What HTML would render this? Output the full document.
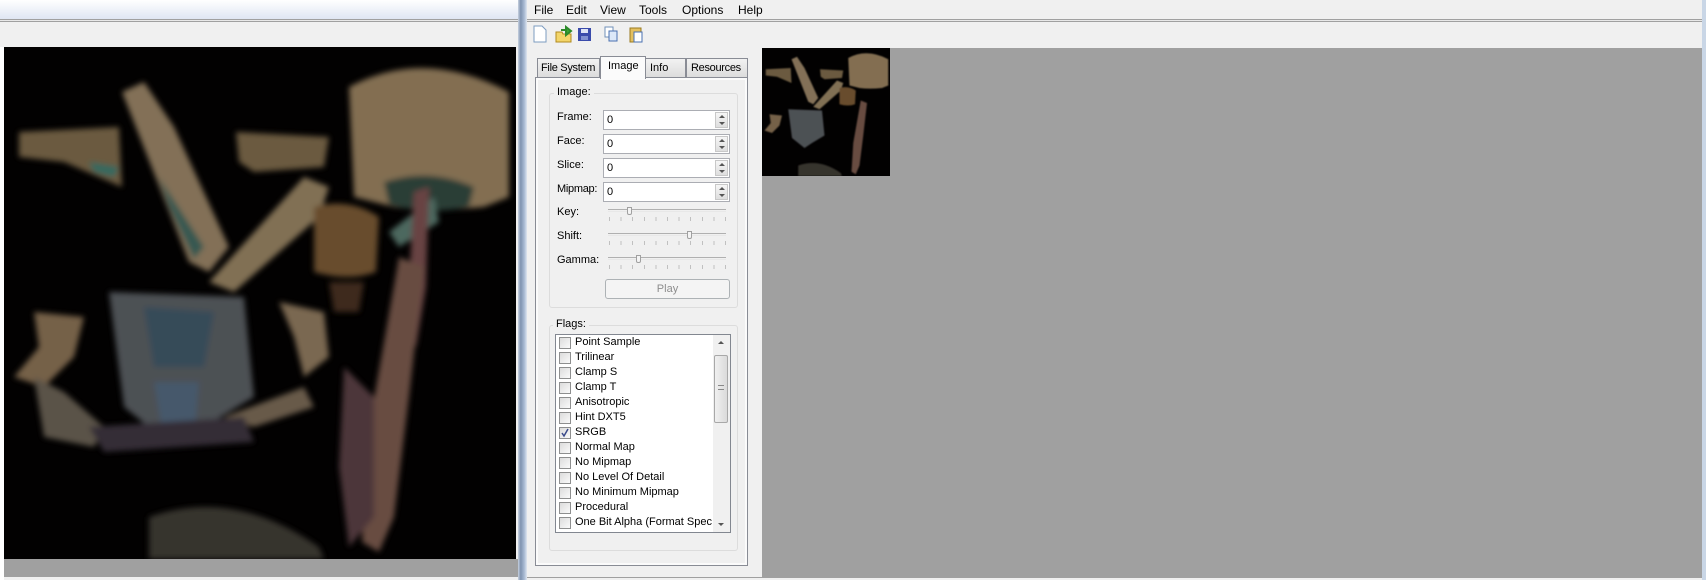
<!DOCTYPE html>
<html><head><meta charset="utf-8"><style>
*{margin:0;padding:0;box-sizing:border-box}
body{width:1706px;height:580px;overflow:hidden;background:#f0f0f0;font-family:"Liberation Sans",sans-serif;font-size:11px;color:#000;position:relative}
.a{position:absolute;white-space:nowrap}
.lbl{position:absolute;font-size:11px}
.tb{position:absolute;left:603px;width:127px;height:20px;background:#fff;border:1px solid #abadb3;padding:3px 0 0 3px;font-size:11px}
.spin{position:absolute;right:1px;top:1px;width:13px;height:16px;border:1px solid #c8c8c8;background:linear-gradient(#f6f6f6,#dedede)}
.spin:before{content:"";position:absolute;left:3px;top:2px;border:3px solid transparent;border-bottom:3px solid #555;border-top:0}
.spin:after{content:"";position:absolute;left:3px;bottom:2px;border:3px solid transparent;border-top:3px solid #555;border-bottom:0}
.track{position:absolute;left:608px;width:118px;height:3px;border-top:1px solid #b0b0b0;border-bottom:1px solid #e8e8e8}
.ticks{position:absolute;left:609px;width:117px;height:4px;background:repeating-linear-gradient(90deg,#c0c0c0 0 1px,transparent 1px 11.6px)}
.thumb{position:absolute;width:5px;height:8px;background:#f4f4f4;border:1px solid #a0a0a0;border-radius:0 0 2px 2px}
.cb{position:absolute;left:559px;width:12px;height:12px;border:1px solid #8e8f8f;background:linear-gradient(135deg,#dcdcdc,#fafafa)}
.it{position:absolute;left:575px;font-size:11px;white-space:nowrap}
</style></head><body>
<div class="a" style="left:0;top:0;width:520px;height:19px;background:linear-gradient(#fff,#dfe6f3)"></div>
<div class="a" style="left:0;top:19px;width:520px;height:3px;border-top:1px solid #a0a0a0;border-bottom:1px solid #a0a0a0;background:#e8e8e8"></div>
<div class="a" style="left:0;top:47px;width:4px;height:533px;background:#fff"></div>
<div class="a" style="left:4px;top:559px;width:514px;height:18px;background:#a0a0a0"></div>
<svg class="a" style="left:4px;top:47px" width="512" height="512" viewBox="0 0 512 512">
<defs><filter id="b"><feGaussianBlur stdDeviation="3"/></filter></defs>
<rect width="512" height="512" fill="#020101"/>
<g filter="url(#b)" opacity="0.85">
<path d="M345 40 Q420 0 505 45 L505 150 L480 160 Q430 165 390 160 L350 150 Z" fill="#9a8260"/>
<path d="M380 135 Q425 120 470 140 L465 160 Q425 168 385 158Z" fill="#324840"/>
<path d="M118 45 L140 35 L170 80 L225 200 L205 225 L185 215 Z" fill="#9a8466"/>
<path d="M155 130 L200 200 L190 212 L165 160Z" fill="#40685e"/>
<path d="M15 85 L115 80 L118 140 L60 115 L15 110Z" fill="#7e6a4c"/>
<path d="M85 115 L115 120 L110 130 L90 125Z" fill="#3c7c70"/>
<path d="M232 85 L325 90 L320 120 L250 125 L235 115Z" fill="#7e6a4c"/>
<path d="M205 235 L300 130 L325 140 L315 170 L230 245Z" fill="#988464"/>
<path d="M310 160 Q345 150 375 170 L372 225 Q345 235 310 225Z" fill="#7a5a34"/>
<path d="M325 235 L360 235 L355 265 L330 265Z" fill="#4a3020"/>
<path d="M385 185 L430 150 L435 175 L395 200Z" fill="#5a7a70"/>
<path d="M410 145 L425 140 L422 240 L412 300 L402 290 Z" fill="#7a5050"/>
<path d="M395 210 L420 220 L405 350 L390 470 L375 505 L358 495 L365 380 Z" fill="#7a5a4e"/>
<path d="M340 320 L370 350 L370 470 L345 500 L335 420Z" fill="#5a4044"/>
<path d="M105 245 L240 250 L250 350 L200 380 L170 400 L120 360 Z" fill="#5a5e64"/>
<path d="M140 260 L210 265 L200 320 L150 320Z" fill="#405868"/>
<path d="M150 335 L195 335 L190 395 L160 395Z" fill="#52687e"/>
<path d="M30 265 L80 270 L70 310 L40 340 L10 330 L35 300Z" fill="#8a7254"/>
<path d="M30 330 L60 345 L100 380 L90 400 L40 390 Z" fill="#6a6254"/>
<path d="M275 255 L320 265 L325 310 L300 330 L290 290Z" fill="#907a5e"/>
<path d="M220 370 L300 340 L310 360 L250 380Z" fill="#7a6a56"/>
<path d="M85 380 L240 370 L250 395 L100 405Z" fill="#3e3440"/>
<path d="M145 470 Q230 440 315 500 L320 512 L145 512Z" fill="#403c36"/>
</g>
</svg>
<div class="a" style="left:518px;top:0;width:9px;height:580px;background:linear-gradient(90deg,#c8d2e0,#7f93b0 30%,#a9bbd4 70%,#dfe6f0)"></div>
<div class="a" style="left:527px;top:0;width:1179px;height:20px;background:#f0f0f0"></div>
<div class="a" style="left:527px;top:19px;width:1175px;height:3px;border-top:1px solid #a0a0a0;border-bottom:1px solid #a0a0a0;background:#e8e8e8"></div>
<div class="a" style="left:1702px;top:0;width:4px;height:580px;background:#c9d6e6"></div>
<div class="a" style="left:534px;top:3px;font-size:12px">File</div>
<div class="a" style="left:566px;top:3px;font-size:12px">Edit</div>
<div class="a" style="left:600px;top:3px;font-size:12px">View</div>
<div class="a" style="left:639px;top:3px;font-size:12px">Tools</div>
<div class="a" style="left:682px;top:3px;font-size:12px">Options</div>
<div class="a" style="left:738px;top:3px;font-size:12px">Help</div>
<svg class="a" style="left:530px;top:24px" width="120" height="20">
<path d="M4 2h8l4 4v12H4z" fill="#fff" stroke="#7d9cc0"/>
<path d="M26 8h6l1 2h8v8H26z" fill="#f3d56a" stroke="#b08a20"/>
<path d="M36 3l5 4-5 4z M31 6h6" fill="#39a833" stroke="#2c8a2a" stroke-width="2"/>
<rect x="48" y="4" width="13" height="13" fill="#3a4bab"/><rect x="51" y="5" width="7" height="4" fill="#dfe4f5"/><rect x="51" y="12" width="7" height="4" fill="#8090d0"/>
<rect x="75" y="3" width="8" height="10" fill="#fff" stroke="#7090b8"/><rect x="79" y="7" width="8" height="10" fill="#dce8f8" stroke="#4a70b0"/>
<rect x="100" y="4" width="11" height="14" fill="#e4c060" stroke="#9a7a20"/><rect x="104" y="8" width="8" height="10" fill="#fff" stroke="#4a70b0"/>
</svg>
<div class="a" style="left:527px;top:47px;width:235px;height:531px;background:#f0f0f0"></div>
<div class="a" style="left:762px;top:48px;width:940px;height:530px;background:#a0a0a0"></div>
<div class="a" style="left:527px;top:577px;width:1175px;height:1px;background:#a0a0a0"></div>
<svg class="a" style="left:762px;top:48px" width="128" height="128" viewBox="0 0 512 512">
<rect width="512" height="512" fill="#020101"/>
<g filter="url(#b)" opacity="0.85">
<path d="M345 40 Q420 0 505 45 L505 150 L480 160 Q430 165 390 160 L350 150 Z" fill="#9a8260"/>
<path d="M118 45 L140 35 L170 80 L225 200 L205 225 L185 215 Z" fill="#9a8466"/>
<path d="M15 85 L115 80 L118 140 L60 115 L15 110Z" fill="#7e6a4c"/>
<path d="M232 85 L325 90 L320 120 L250 125 L235 115Z" fill="#7e6a4c"/>
<path d="M205 235 L300 130 L325 140 L315 170 L230 245Z" fill="#988464"/>
<path d="M310 160 Q345 150 375 170 L372 225 Q345 235 310 225Z" fill="#7a5a34"/>
<path d="M395 210 L420 220 L405 350 L390 470 L375 505 L358 495 L365 380 Z" fill="#7a5a4e"/>
<path d="M105 245 L240 250 L250 350 L200 380 L170 400 L120 360 Z" fill="#5a5e64"/>
<path d="M30 265 L80 270 L70 310 L40 340 L10 330 L35 300Z" fill="#8a7254"/>
<path d="M145 470 Q230 440 315 500 L320 512 L145 512Z" fill="#403c36"/>
</g></svg>
<div class="a" style="left:535px;top:77px;width:213px;height:489px;border:1px solid #898c95;background:#fbfbfb"></div>
<div class="a" style="left:537px;top:58px;width:63px;height:20px;border:1px solid #898c95;background:linear-gradient(#f2f2f2,#dcdcdc);padding:3px 0 0 3px;font-size:11px;letter-spacing:-0.3px">File System</div>
<div class="a" style="left:645px;top:58px;width:41px;height:20px;border:1px solid #898c95;background:linear-gradient(#f2f2f2,#dcdcdc);padding:3px 0 0 4px;font-size:11px">Info</div>
<div class="a" style="left:686px;top:58px;width:62px;height:20px;border:1px solid #898c95;background:linear-gradient(#f2f2f2,#dcdcdc);padding:3px 0 0 4px;font-size:11px;letter-spacing:-0.3px">Resources</div>
<div class="a" style="left:600px;top:56px;width:46px;height:23px;border:1px solid #898c95;border-bottom:none;background:#fbfbfb;padding:3px 0 0 7px;font-size:11px">Image</div>
<div class="a" style="left:538px;top:80px;width:207px;height:483px;background:#f0f0f0"></div>
<div class="a" style="left:549px;top:93px;width:189px;height:215px;border:1px solid #dcdcdc;border-radius:3px"></div>
<div class="a" style="left:554px;top:86px;background:#f0f0f0;padding:0 3px;font-size:11px">Image:</div>
<div class="lbl" style="left:557px;top:111px">Frame:</div>
<div class="lbl" style="left:557px;top:135px">Face:</div>
<div class="lbl" style="left:557px;top:159px">Slice:</div>
<div class="lbl" style="left:557px;top:183px;letter-spacing:-0.3px">Mipmap:</div>
<div class="tb" style="top:110px">0<div class="spin"></div></div>
<div class="tb" style="top:134px">0<div class="spin"></div></div>
<div class="tb" style="top:158px">0<div class="spin"></div></div>
<div class="tb" style="top:182px">0<div class="spin"></div></div>
<div class="lbl" style="left:557px;top:206px">Key:</div>
<div class="lbl" style="left:557px;top:230px">Shift:</div>
<div class="lbl" style="left:557px;top:254px">Gamma:</div>
<div class="track" style="top:209px"></div><div class="ticks" style="top:217px"></div><div class="thumb" style="left:627px;top:207px"></div>
<div class="track" style="top:233px"></div><div class="ticks" style="top:241px"></div><div class="thumb" style="left:687px;top:231px"></div>
<div class="track" style="top:257px"></div><div class="ticks" style="top:265px"></div><div class="thumb" style="left:636px;top:255px"></div>
<div class="a" style="left:605px;top:279px;width:125px;height:20px;border:1px solid #adb2b5;border-radius:3px;background:#f4f4f4;color:#8d8d8d;text-align:center;padding-top:3px;font-size:11px">Play</div>
<div class="a" style="left:549px;top:325px;width:189px;height:226px;border:1px solid #dcdcdc;border-radius:3px"></div>
<div class="a" style="left:553px;top:318px;background:#f0f0f0;padding:0 3px;font-size:11px">Flags:</div>
<div class="a" style="left:555px;top:334px;width:176px;height:199px;border:1px solid #828790;background:#fff"></div>
<div class="a" style="left:713px;top:335px;width:17px;height:197px;background:#f0f0f0"></div>
<div class="a" style="left:714px;top:355px;width:14px;height:68px;border:1px solid #a8a8a8;border-radius:2px;background:linear-gradient(90deg,#f0f0f0,#dadada)"></div>
<div class="a" style="left:718px;top:341px;border:3px solid transparent;border-bottom:3px solid #555;border-top:0"></div>
<div class="a" style="left:718px;top:523px;border:3px solid transparent;border-top:3px solid #555;border-bottom:0"></div>
<div class="a" style="left:718px;top:385px;width:6px;height:5px;border-top:1px solid #888;border-bottom:1px solid #888"></div>
<div class="cb" style="top:337px"></div><div class="it" style="top:336px">Point Sample</div>
<div class="cb" style="top:352px"></div><div class="it" style="top:351px">Trilinear</div>
<div class="cb" style="top:367px"></div><div class="it" style="top:366px">Clamp S</div>
<div class="cb" style="top:382px"></div><div class="it" style="top:381px">Clamp T</div>
<div class="cb" style="top:397px"></div><div class="it" style="top:396px">Anisotropic</div>
<div class="cb" style="top:412px"></div><div class="it" style="top:411px">Hint DXT5</div>
<div class="cb" style="top:427px"><svg width="10" height="10" style="position:absolute;left:0;top:0"><path d="M2 5l2 3 4-7" fill="none" stroke="#3a4a8a" stroke-width="1.5"/></svg></div><div class="it" style="top:426px">SRGB</div>
<div class="cb" style="top:442px"></div><div class="it" style="top:441px">Normal Map</div>
<div class="cb" style="top:457px"></div><div class="it" style="top:456px">No Mipmap</div>
<div class="cb" style="top:472px"></div><div class="it" style="top:471px">No Level Of Detail</div>
<div class="cb" style="top:487px"></div><div class="it" style="top:486px">No Minimum Mipmap</div>
<div class="cb" style="top:502px"></div><div class="it" style="top:501px">Procedural</div>
<div class="cb" style="top:517px"></div><div class="it" style="top:516px;width:137px;overflow:hidden">One Bit Alpha (Format Spec</div>
</body></html>
